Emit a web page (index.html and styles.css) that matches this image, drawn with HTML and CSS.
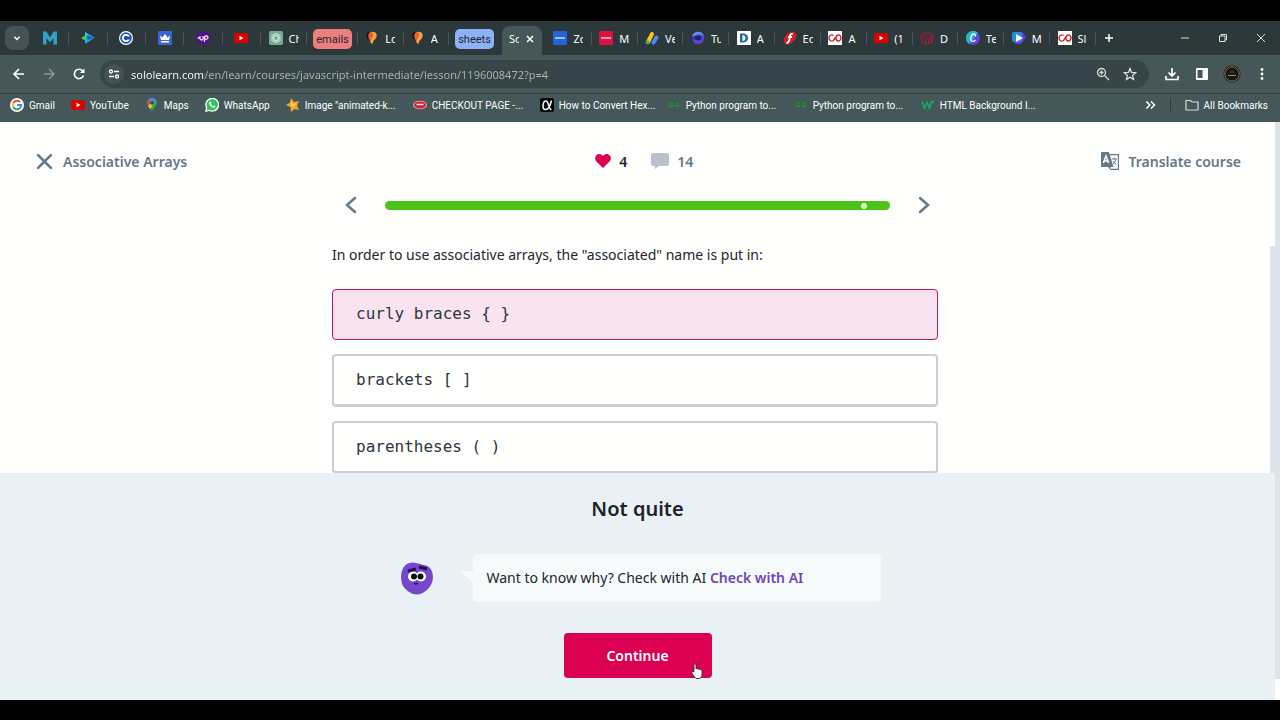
FILE: index.html
```html
<!DOCTYPE html>
<html lang="en">
<head>
    <meta charset="utf-8">
    <title>Associative Arrays</title>
    <link rel="stylesheet" href="styles.css">
</head>
<body>
    <!-- icons used more than once -->
    <svg class="defs" aria-hidden="true">
        <symbol id="yt" viewBox="0 0 14 14"><rect y="2" width="14" height="10" rx="2.5" fill="#e00000"/><path d="M5.5 4.8v4.4L9.4 7z" fill="#fff"/></symbol>
        <symbol id="flame" viewBox="0 0 14 14"><path d="M6 1C2 0 0 4 2 8l2-1z" fill="#20130f"/><path d="M6 1c5-1 7 3 5 6-1 2-3 2-3 5C7 14 5 12 5 9 3 6 3 2 6 1z" fill="#f5a13c"/><path d="M6 1C3 2 3 6 5 9l1 1C6 7 8 6 8 4 8 2 7 1 6 1z" fill="#ec5d2f"/></symbol>
        <symbol id="gfg" viewBox="0 0 14 14"><path d="M5.500 5.500a2 2 0 1 0 .5 2H2M8.500 5.500a2 2 0 1 1-.5 2H12" fill="none" stroke="#258b40" stroke-width="1.200"/></symbol>
        <symbol id="co" viewBox="0 0 14 14"><rect width="14" height="14" fill="#fff"/><path d="M5.500 4.500C3.500 3 1 4.500 1 7s2.500 4 4.500 2.500L8.500 5c1.500-2 4.500-.8 4.500 2s-3 4-4.500 2c-1-1.500-.8-3 0-4" fill="none" stroke="#c5232d" stroke-width="1.400"/></symbol>
    </svg>

    <div class="tab-strip">
        <button class="tab-search" aria-label="Search tabs"><svg viewBox="0 0 24 24"><path d="M7.500 10l4.500 4.500 4.500-4.500" fill="none" stroke="#fff" stroke-width="2.500"/></svg></button>
        <div class="tabs pinned">
            <button class="tab" aria-label="M"><svg class="icon" viewBox="0 0 14 14"><path d="M0 13.500V.500h3.500L7 6.500l3.500-6H14v13h-3.500V7L7 11.500 3.500 7v6.500z" fill="#2fa3c4"/></svg></button>
            <button class="tab" aria-label="Player"><svg class="icon" viewBox="0 0 14 14"><path d="M4 1l10 5.500L4 13z" fill="#2c9fe0"/><path d="M5 4l9 2.500L7 9z" fill="#1b65b8"/><path d="M0 7l5-3v6z" fill="#41d34b"/><path d="M4 1l3 3-3 2z" fill="#37cfd6"/></svg></button>
            <button class="tab" aria-label="Circle"><svg class="icon" viewBox="0 0 14 14"><circle cx="7" cy="7" r="7" fill="#fff"/><circle cx="7" cy="7" r="5.800" fill="#1c4cb0"/><circle cx="7" cy="7" r="4" fill="#fff"/><path d="M12 5.500H8.500a2.200 2.200 0 1 0 0 3H12z" fill="#1c4cb0"/></svg></button>
            <button class="tab" aria-label="Wazir"><svg class="icon" viewBox="0 0 14 14"><rect width="14" height="14" rx="1" fill="#3767d4"/><path d="M2 4.500l2.500 2L7 3l2.500 3.500 2.500-2L11 9H3zM3 10h8v1.500H3z" fill="#fff"/></svg></button>
            <button class="tab" aria-label="Upwork"><svg class="icon" viewBox="0 0 14 14"><circle cx="7" cy="7" r="7" fill="#4b1386"/><path d="M1.500 7h2M4 5v2.500c0 2 3 2 3 0V5M8.500 11V6.500c0-2 3.500-2 3.500 0s-3 2-3.500 1" fill="none" stroke="#efdcff" stroke-width="1.300"/></svg></button>
            <button class="tab" aria-label="YouTube"><svg class="icon"><use href="#yt"/></svg></button>
        </div>
        <div class="tabs single">
            <button class="tab"><svg class="icon" viewBox="0 0 14 14"><rect width="14" height="14" rx="2" fill="#74aa94"/><g fill="none" stroke="#e6f3ee" stroke-width=".7"><ellipse cx="7" cy="7" rx="2.300" ry="4.800"/><ellipse cx="7" cy="7" rx="2.300" ry="4.800" transform="rotate(60 7 7)"/><ellipse cx="7" cy="7" rx="2.300" ry="4.800" transform="rotate(120 7 7)"/></g></svg><span>Ch</span></button>
        </div>
        <button class="group emails">emails</button>
        <div class="tabs pair">
            <button class="tab"><svg class="icon"><use href="#flame"/></svg><span>Lo</span></button>
            <button class="tab"><svg class="icon"><use href="#flame"/></svg><span>A</span></button>
        </div>
        <button class="group sheets">sheets</button>
        <button class="tab active"><span>So</span><svg class="close" viewBox="0 0 10 10"><path d="M2 2l6 6M8 2L2 8" stroke="#fff" stroke-width="1.500"/></svg></button>
        <div class="tabs rest">
            <button class="tab"><svg class="icon" viewBox="0 0 14 14"><rect width="14" height="14" rx="1" fill="#2265d8"/><path d="M2 7h10" stroke="#c9dcff" stroke-width="1.500"/></svg><span>Zo</span></button>
            <button class="tab"><svg class="icon" viewBox="0 0 14 14"><rect width="14" height="14" rx="1" fill="#d9123f"/><path d="M2 7h10" stroke="#ffc9d3" stroke-width="1.500"/></svg><span>M</span></button>
            <button class="tab"><svg class="icon" viewBox="0 0 14 14"><path d="M3 11L7 3" stroke="#f4c325" stroke-width="4" stroke-linecap="round"/><path d="M8.500 11.500l3-5" stroke="#4b8af0" stroke-width="4" stroke-linecap="round"/><circle cx="2.500" cy="11.500" r="2" fill="#3fae52"/></svg><span>Ve</span></button>
            <button class="tab"><svg class="icon" viewBox="0 0 14 14"><circle cx="7" cy="7" r="6.200" fill="#5548d9"/><path d="M1 5C4-1 11 0 13 5L8 3z" fill="#5d96ee"/><ellipse cx="7" cy="7" rx="3.500" ry="2.300" fill="#25255c"/><path d="M0 4l4 3-3 3z" fill="#3a2db4"/></svg><span>Tu</span></button>
            <button class="tab"><svg class="icon" viewBox="0 0 14 14"><rect width="14" height="14" fill="#fff"/><path d="M3 2.500h3.500c6 0 6 9 0 9H3zM5.500 4v6c4 0 4-6 0-6z" fill="#176b94"/></svg><span>A</span></button>
            <button class="tab"><svg class="icon" viewBox="0 0 14 14"><ellipse cx="7" cy="7" rx="7.500" ry="5" fill="#cf1f25" transform="rotate(-45 7 7)"/><path d="M10 3C7 2 7 5 6.500 8S5 12 3.500 12M5 6h4" fill="none" stroke="#fff" stroke-width="1.800"/></svg><span>Ed</span></button>
            <button class="tab"><svg class="icon"><use href="#co"/></svg><span>A</span></button>
            <button class="tab"><svg class="icon"><use href="#yt"/></svg><span>(1</span></button>
            <button class="tab"><svg class="icon" viewBox="0 0 14 14"><g fill="none" stroke="#c4123f" stroke-width="1"><circle cx="7" cy="7" r="6"/><path d="M3 7.500c.5-5 8-5 8 0V12M5.500 12.500V8c.5-2 3-2 3 0v4.500"/></g></svg><span>D</span></button>
            <button class="tab"><svg class="icon" viewBox="0 0 14 14"><circle cx="7" cy="7" r="7" fill="#6043dc"/><path d="M0 7a7 7 0 0 1 12-5L3 13A7 7 0 0 1 0 7z" fill="#27b4cb"/><path d="M9.500 5.500C10 2 6 2 5 6s1 6 4.500 3" fill="none" stroke="#fff" stroke-width="1.200"/></svg><span>Te</span></button>
            <button class="tab"><svg class="icon" viewBox="0 0 14 14"><path d="M2 1h8l4 5-5 7H3z" fill="#6c39e3"/><rect y="1" width="10" height="10" rx="2" fill="#258bdd"/><path d="M4 3l7 4-7 4z" fill="#fff"/></svg><span>M</span></button>
            <button class="tab"><svg class="icon"><use href="#co"/></svg><span>Sl</span></button>
        </div>
        <button class="new-tab" aria-label="New tab"><svg viewBox="0 0 10 10"><path d="M5 1v8M1 5h8" stroke="#fff" stroke-width="1.500"/></svg></button>
        <div class="window-buttons">
            <button aria-label="Minimize"><svg viewBox="0 0 10 10"><path d="M1 5h8" stroke="#ddd"/></svg></button>
            <button aria-label="Restore"><svg viewBox="0 0 10 10"><path d="M1.500 3h5.500v5.500H1.500zM3 3V1.500h5.500V7H7" fill="none" stroke="#ddd"/></svg></button>
            <button aria-label="Close"><svg viewBox="0 0 10 10"><path d="M1 1l8 8M9 1L1 9" stroke="#ddd"/></svg></button>
        </div>
    </div>

    <div class="toolbar">
        <button aria-label="Back"><svg viewBox="0 0 14 14"><path d="M12 7H2M7 2L2 7l5 5" fill="none" stroke="#fff" stroke-width="1.600"/></svg></button>
        <button aria-label="Forward"><svg viewBox="0 0 14 14"><path d="M2 7h10M7 2l5 5-5 5" fill="none" stroke="#8b9799" stroke-width="1.400"/></svg></button>
        <button aria-label="Reload"><svg viewBox="0 0 14 14"><path d="M11.500 8.500A4.700 4.700 0 1 1 11 4.300" fill="none" stroke="#fff" stroke-width="1.600"/><path d="M12.500 1.500V6H8z" fill="#fff"/></svg></button>
        <div class="omnibox">
            <button class="site-info" aria-label="Site information"><svg viewBox="0 0 12 12"><g fill="none" stroke="#fff" stroke-width="1.300"><circle cx="3" cy="3.500" r="1.500"/><path d="M6 3.500h5M1 8.500h5"/><circle cx="9" cy="8.500" r="1.500"/></g></svg></button>
            <input class="url" type="text" aria-label="Address" value="sololearn.com/en/learn/courses/javascript-intermediate/lesson/1196008472?p=4">
            <button aria-label="Zoom"><svg viewBox="0 0 14 14"><g fill="none" stroke="#d5dbdc" stroke-width="1.300"><circle cx="5.500" cy="5.500" r="4"/><path d="M8.500 8.500L13 13M3.500 5.500h4M5.500 3.500v4"/></g></svg></button>
            <button aria-label="Bookmark this page"><svg viewBox="0 0 14 14"><path d="M7 1.500l1.600 3.900 4.200.3-3.200 2.700 1 4.100L7 10.300l-3.600 2.200 1-4.100L1.200 5.700l4.200-.3z" fill="none" stroke="#e3e7e8" stroke-width="1.200"/></svg></button>
        </div>
        <div class="toolbar-buttons">
            <button aria-label="Downloads"><svg viewBox="0 0 14 14"><path d="M7 1v8M3.500 5.500L7 9l3.500-3.500M1 9v3.500h12V9" fill="none" stroke="#fff" stroke-width="1.700"/></svg></button>
            <button aria-label="Side panel"><svg viewBox="0 0 14 14"><rect x="1" y="1" width="12" height="12" rx="1" fill="#fff"/><rect x="2.500" y="3" width="5" height="8" fill="#455759"/></svg></button>
            <button aria-label="Profile"><svg class="avatar" viewBox="0 0 18 18"><circle cx="9" cy="9" r="8.500" fill="#171914"/><circle cx="9" cy="9" r="7.200" fill="none" stroke="#8d7b52"/><path d="M5 10.500h8" stroke="#a39468"/><path d="M7 7h4" stroke="#8b4336"/></svg></button>
            <button aria-label="Menu"><svg viewBox="0 0 14 14"><g fill="#fff"><circle cx="7" cy="2.500" r="1.400"/><circle cx="7" cy="7" r="1.400"/><circle cx="7" cy="11.500" r="1.400"/></g></svg></button>
        </div>
    </div>

    <nav class="bookmarks">
        <a href="#"><svg class="icon" viewBox="0 0 14 14"><circle cx="7" cy="7" r="7" fill="#fff"/><g fill="none" stroke-width="2"><path d="M10 4A4.200 4.200 0 0 0 3.200 5.200" stroke="#e8453c"/><path d="M3.200 5.200a4.200 4.200 0 0 0 0 3.600" stroke="#f6bb16"/><path d="M3.200 8.800A4.200 4.200 0 0 0 9.800 10.200" stroke="#35a653"/><path d="M9.800 10.200c1-.8 1.400-2 1.400-3.200H7" stroke="#4284f3"/></g></svg>Gmail</a>
        <a href="#"><svg class="icon"><use href="#yt"/></svg>YouTube</a>
        <a href="#"><svg class="icon" viewBox="0 0 14 14"><path d="M7 0a5 5 0 0 1 5 5c0 3-4 5-5 9-1-4-5-6-5-9a5 5 0 0 1 5-5z" fill="#35a556"/><path d="M2 5a5 5 0 0 1 1.500-3.500L6 4 3 8z" fill="#e54438"/><path d="M3.500 1.500A5 5 0 0 1 11 2L7 5z" fill="#4287ee"/><path d="M3 8l4-4 1 3-3 4z" fill="#f7c32f"/><circle cx="7" cy="5" r="1.800" fill="#2c4a5c"/></svg>Maps</a>
        <a href="#"><svg class="icon" viewBox="0 0 14 14"><path d="M0 14l1-4A7 7 0 1 1 4 13z" fill="#fff"/><path d="M1.500 12.500l.8-2.800a5.700 5.700 0 1 1 2 2z" fill="#2cc558"/><path d="M4.500 4c1-1 1.500 0 1.800 1 .2.500-.6.800-.4 1.100.6 1 1.200 1.600 2.200 2 .4.200.8-.8 1.200-.6 1.500.7 1.500.9.700 1.700C8 11 3 7 4.500 4z" fill="#fff"/></svg>WhatsApp</a>
        <a class="long" href="#"><svg class="icon" viewBox="0 0 14 14"><path d="M5 0l3 4 5-1-2 4.500 2 4.500-4.500-1L5 14l-.5-5L0 7l4-2.500z" fill="#f6a42b"/><path d="M5 3l2 3 3-.5L8 9 5 8z" fill="#ffcd58"/></svg><span>Image "animated-k...</span></a>
        <a class="long" href="#"><svg class="icon" viewBox="0 0 14 14"><ellipse cx="7" cy="7" rx="7" ry="4.300" fill="#e9a9ae"/><ellipse cx="7" cy="7" rx="6" ry="3.400" fill="#c92738"/><path d="M3.500 6.500h7" stroke="#fbe4e6" stroke-width="1.400"/></svg><span>CHECKOUT PAGE -...</span></a>
        <a class="long" href="#"><svg class="icon" viewBox="0 0 14 14"><rect width="14" height="14" rx="2" fill="#050505"/><path d="M11.500 2.500C10 9 7.500 12 5 11.500 2 11 2.500 3 6 3c3 0 2.500 9 5.500 8.500" fill="none" stroke="#fff" stroke-width="1.500"/></svg><span>How to Convert Hex...</span></a>
        <a class="long" href="#"><svg class="icon"><use href="#gfg"/></svg><span>Python program to...</span></a>
        <a class="long" href="#"><svg class="icon"><use href="#gfg"/></svg><span>Python program to...</span></a>
        <a class="long" href="#"><svg class="icon" viewBox="0 0 14 14"><path d="M1 4l2.500 6L6 4.500 8.500 10l2-6H13" fill="none" stroke="#16a765" stroke-width="1.800"/></svg><span>HTML Background I...</span></a>
        <div class="bookmarks-end">
            <button aria-label="More bookmarks"><svg viewBox="0 0 12 12"><path d="M2 3l3 3-3 3M6 3l3 3-3 3" fill="none" stroke="#fff" stroke-width="1.300"/></svg></button>
            <a class="all" href="#"><svg class="icon" viewBox="0 0 14 14"><path d="M1 2.500h4.500L7 4h6v8H1z" fill="none" stroke="#d3dadb" stroke-width="1.200"/></svg>All Bookmarks</a>
        </div>
    </nav>

    <div class="page">
        <div class="page-body">
            <div class="lesson">
                <main class="lesson-content">
                    <header class="lesson-header">
                        <button class="lesson-title"><svg viewBox="0 0 16 16"><path d="M2 2l12 12M14 2L2 14" stroke="#64798a" stroke-width="2.500" stroke-linecap="round"/></svg>Associative Arrays</button>
                        <div class="stats">
                            <span class="hearts"><svg viewBox="0 0 16 14"><path d="M8 14L1.500 7.500C-1.500 4 1 0 4.500 0 6 0 7.500 1 8 2c.5-1 2-2 3.500-2C15 0 17.500 4 14.500 7.500z" fill="#dc0052"/></svg>4</span>
                            <button class="comments"><svg viewBox="0 0 18 16"><path d="M2 0h14a2 2 0 0 1 2 2v9a2 2 0 0 1-2 2H8l-4 3v-3H2a2 2 0 0 1-2-2V2a2 2 0 0 1 2-2z" fill="#b8c2cf"/></svg>14</button>
                        </div>
                        <button class="translate"><svg viewBox="0 0 18 18"><path d="M8.500 2.600h8.900v14.800H9.500" fill="none" stroke="#64798a" stroke-width="1.200"/><path d="M1 0h7l4.500 15H9.500v3l-2.500-3H1a1 1 0 0 1-1-1V1a1 1 0 0 1 1-1z" fill="#64798a"/><path d="M2.300 11L5 4l2.700 7M3.500 9h3" fill="none" stroke="#fff" stroke-width="1.500"/><path d="M10.800 7h5M13.300 5.500V7M15 7c-.5 2-1.500 3.500-3 5M12 9l3 3.500" fill="none" stroke="#64798a"/></svg>Translate course</button>
                    </header>

                    <div class="lesson-nav">
                        <button aria-label="Previous"><svg viewBox="0 0 12 18"><path d="M10 2L2 9l8 7" fill="none" stroke="#64798a" stroke-width="2.500" stroke-linecap="round"/></svg></button>
                        <div class="progress"><span class="progress-dot"></span></div>
                        <button aria-label="Next"><svg viewBox="0 0 12 18"><path d="M2 2l8 7-8 7" fill="none" stroke="#64798a" stroke-width="2.500" stroke-linecap="round"/></svg></button>
                    </div>

                    <section class="question">
                        <p>In order to use associative arrays, the "associated" name is put in:</p>
                        <button class="option wrong">curly braces { }</button>
                        <button class="option">brackets [ ]</button>
                        <button class="option">parentheses ( )</button>
                    </section>
                </main>
                <div class="lesson-scroll"></div>
            </div>

            <section class="feedback">
                <h2>Not quite</h2>
                <div class="ai-hint">
                    <svg class="mascot" viewBox="0 0 32 32"><path d="M7 1c6-3 12 1 18 2 7 2 8 12 6 17-2 6-9 12-15 12S3 27 1 21 0 4 7 1z" fill="#7547cc"/><circle cx="12" cy="14" r="5" fill="#fff"/><circle cx="20" cy="14" r="5" fill="#fff"/><circle cx="13" cy="14" r="3" fill="#111"/><circle cx="19.500" cy="14" r="3" fill="#111"/><path d="M7 8.500l8-2M18 4.500l8 2" stroke="#201247" stroke-width="3"/><path d="M13 20.500q2 2 3.500 0" fill="none" stroke="#201247" stroke-width="1.500"/></svg>
                    <div class="bubble">Want to know why? Check with AI <a href="#">Check with AI</a></div>
                </div>
                <button class="continue">Continue
                    <svg class="pointer" viewBox="0 0 12 16"><path d="M3 9V2c0-1.300 2-1.300 2 0v4c.5-.8 1.800-.6 2 .3.500-.7 1.700-.4 2 .5.800-.5 2 0 2 1V11c0 2-1 4-2 4.500H5C4 14.500 2 12 .8 10 .3 8.800 2 8 3 9z" fill="#fff" stroke="#222" stroke-width=".8"/></svg>
                </button>
            </section>
        </div>
        <div class="page-scroll"></div>
    </div>
</body>
</html>
```
FILE: styles.css
```css
* { box-sizing: border-box; }
body { margin: 0; height: 100vh; padding: 21px 0 20px; display: flex; flex-direction: column; background: #000; font-family: "Noto Sans", sans-serif; overflow: hidden; }
button { padding: 0; border: 0; background: none; font: inherit; color: inherit; display: flex; align-items: center; justify-content: center; }
a { color: inherit; text-decoration: none; }
svg { display: block; flex-shrink: 0; }
.defs { display: none; }
.icon { width: 14px; height: 14px; }

/* browser tabs */
.tab-strip { display: flex; align-items: center; height: 34px; background: #2c383a; color: #fff; font-size: 11px; padding-left: 5px; flex-shrink: 0; }
.tab-search { width: 24px; height: 24px; border-radius: 8px; background: #455356; margin-right: 2px; }
.tab-search svg { width: 14px; height: 14px; }
.tabs { display: flex; flex-shrink: 0; }
.pinned { width: 230px; }
.single { width: 46px; }
.pair { width: 92px; border-left: 1px solid #48565b; }
.rest { width: 550px; }
.tab { flex: 1; height: 13px; gap: 6px; border-right: 1px solid #48565b; }
.tab span { width: 10px; overflow: hidden; white-space: nowrap; text-align: left; }
.group { width: 39px; height: 20px; border-radius: 5px; margin: 2px 5px 0 6px; color: #26282b; font: 11px Roboto, sans-serif; }
.emails { background: #ec8080; }
.sheets { background: #8bb1f8; }
.tab.active { flex: 0 0 40px; height: 29px; align-self: flex-end; padding-bottom: 4px; border: 0; border-radius: 8px 8px 0 0; background: #455759; margin: 0 4px 0 3px; }
.close { width: 10px; height: 10px; }
.new-tab { width: 26px; height: 24px; }
.new-tab svg { width: 10px; height: 10px; }
.window-buttons { display: flex; margin-left: auto; }
.window-buttons button { width: 38px; height: 30px; }
.window-buttons svg { width: 10px; height: 10px; }

/* address row */
.toolbar { display: flex; align-items: center; height: 38px; padding: 0 3px 0 4px; background: #455759; flex-shrink: 0; box-shadow: 0 1px #303e41; z-index: 1; }
.toolbar button { width: 30px; height: 28px; }
.toolbar svg { width: 14px; height: 14px; }
.omnibox { flex: 1; display: flex; align-items: center; height: 28px; margin: 0 8px 0 6px; padding: 0 6px 0 4px; border-radius: 14px; background: #37454a; }
.toolbar .omnibox button { width: 27px; }
.toolbar .site-info { width: 20px; height: 20px; border-radius: 10px; background: #455357; flex: 0 0 20px; }
.site-info svg { width: 12px; height: 12px; }
.url { flex: 1; min-width: 0; border: 0; padding: 0 0 0 7px; font: 11px "Noto Sans", sans-serif; color: transparent; background: linear-gradient(to right, #fff 80px, #a9b5b8 80px); background-clip: text; -webkit-background-clip: text; }
.toolbar-buttons { display: flex; }
.toolbar .avatar { width: 18px; height: 18px; }

.bookmarks { display: flex; align-items: center; height: 29px; padding: 1px 12px 6px 10px; background: #455759; color: #fff; font: 10px Roboto, sans-serif; flex-shrink: 0; }
.bookmarks a { display: flex; align-items: center; gap: 5px; margin-right: 16px; white-space: nowrap; }
.bookmarks a.long { flex: 0 1 127px; margin: 0; }
.bookmarks-end { display: flex; align-items: center; margin-left: auto; }
.bookmarks-end svg { width: 14px; height: 14px; }
.bookmarks .all { border-left: 1px solid #2f3d40; margin: 0 0 0 12px; padding-left: 14px; }

/* course page */
.page { flex: 1; min-height: 0; display: flex; background: #fffffe; }
.page-body { flex: 1; display: flex; flex-direction: column; }
.page-scroll { width: 5px; margin-bottom: 21px; background: #dde4e7; }
.lesson { flex: 1; min-height: 0; display: flex; overflow: hidden; }
.lesson-content { flex: 1; }
.lesson-scroll { width: 5px; margin-top: 124px; background: #dde4e7; }
.lesson-header { display: flex; justify-content: space-between; align-items: center; height: 24px; margin: 27px 29px 0 36px; font-size: 14px; font-weight: 600; color: #64798a; }
.lesson-title { gap: 10px; }
.lesson-title svg { width: 17px; height: 17px; }
.stats { display: flex; gap: 24px; }
.hearts, .comments { display: flex; align-items: center; gap: 8px; }
.hearts { color: #1d252c; }
.hearts svg { width: 16px; height: 14px; }
.comments svg { width: 18px; height: 16px; }
.translate { gap: 9px; }
.translate svg { width: 18px; height: 18px; }

.lesson-nav { display: flex; align-items: center; justify-content: space-between; gap: 28px; max-width: 590px; margin: 22px auto 0; padding-left: 5px; }
.lesson-nav svg { width: 12px; height: 20px; }
.progress { position: relative; flex: 1; height: 9px; border-radius: 5px; background: #4bc318; }
.progress-dot { position: absolute; right: 23px; top: 2px; width: 6px; height: 6px; border-radius: 3px; background: #d4ffc2; }

.question { display: flex; flex-direction: column; gap: 14px; max-width: 606px; margin: 0 auto; }
.question p { margin: 28px 0 8px; font-size: 14px; line-height: 24px; color: #20272d; }
.option { justify-content: flex-start; flex-shrink: 0; height: 53px; padding: 0 22px 2px; border: 2px solid #c8d1d9; border-bottom-width: 3px; border-radius: 4px; background: #fffffe; font: 16px "DejaVu Sans Mono", monospace; color: #2d3640; }
.option.wrong { height: 51px; border: 1px solid #c3165d; padding: 0 23px 2px; background: #f9e3ef; }

/* answer panel */
.feedback { display: flex; flex-direction: column; align-items: center; padding: 20px 0 22px; background: #e9f1f5; }
.feedback h2 { margin: 0; font-size: 20px; font-weight: 600; line-height: 32px; color: #1c2327; }
.ai-hint { display: flex; align-items: center; gap: 40px; margin: 29px 0 31px; padding-left: 6px; width: 486px; max-width: 100%; }
.mascot { width: 32px; height: 33px; }
.bubble { position: relative; flex: 1; padding: 12px 14px; border-radius: 4px; background: #f7fafb; font-size: 14px; line-height: 24px; color: #20272d; }
.bubble::before { content: ""; position: absolute; left: -12px; top: 17px; border-top: 12px solid #f7fafb; border-left: 12px solid transparent; }
.bubble a { color: #6f45bd; font-weight: 600; }
.continue { position: relative; width: 148px; height: 45px; border-radius: 4px; background: #dc0052; color: #fff; font-size: 14px; font-weight: 600; }
.pointer { position: absolute; right: 9px; bottom: -1px; width: 12px; height: 16px; }
```
